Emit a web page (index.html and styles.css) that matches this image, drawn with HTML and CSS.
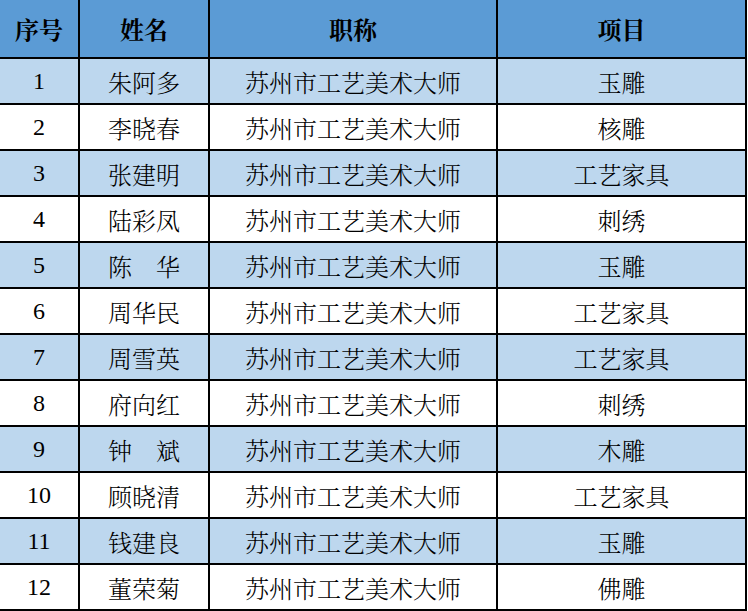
FILE: index.html
```html
<!DOCTYPE html>
<html lang="zh-CN">
<head>
<meta charset="utf-8">
<title>苏州市工艺美术大师</title>
<link rel="stylesheet" href="styles.css">
</head>
<body>
<div class="table">
  <div class="cell head">序号</div><div class="cell head">姓名</div><div class="cell head">职称</div><div class="cell head">项目</div>

  <div class="cell alt num">1</div><div class="cell alt">朱阿多</div><div class="cell alt">苏州市工艺美术大师</div><div class="cell alt">玉雕</div>
  <div class="cell num">2</div><div class="cell">李晓春</div><div class="cell">苏州市工艺美术大师</div><div class="cell">核雕</div>
  <div class="cell alt num">3</div><div class="cell alt">张建明</div><div class="cell alt">苏州市工艺美术大师</div><div class="cell alt">工艺家具</div>
  <div class="cell num">4</div><div class="cell">陆彩凤</div><div class="cell">苏州市工艺美术大师</div><div class="cell">刺绣</div>
  <div class="cell alt num">5</div><div class="cell alt">陈　华</div><div class="cell alt">苏州市工艺美术大师</div><div class="cell alt">玉雕</div>
  <div class="cell num">6</div><div class="cell">周华民</div><div class="cell">苏州市工艺美术大师</div><div class="cell">工艺家具</div>
  <div class="cell alt num">7</div><div class="cell alt">周雪英</div><div class="cell alt">苏州市工艺美术大师</div><div class="cell alt">工艺家具</div>
  <div class="cell num">8</div><div class="cell">府向红</div><div class="cell">苏州市工艺美术大师</div><div class="cell">刺绣</div>
  <div class="cell alt num">9</div><div class="cell alt">钟　斌</div><div class="cell alt">苏州市工艺美术大师</div><div class="cell alt">木雕</div>
  <div class="cell num">10</div><div class="cell">顾晓清</div><div class="cell">苏州市工艺美术大师</div><div class="cell">工艺家具</div>
  <div class="cell alt num">11</div><div class="cell alt">钱建良</div><div class="cell alt">苏州市工艺美术大师</div><div class="cell alt">玉雕</div>
  <div class="cell num">12</div><div class="cell">董荣菊</div><div class="cell">苏州市工艺美术大师</div><div class="cell">佛雕</div>
</div>
</body>
</html>
```

FILE: styles.css
```css
html, body {
  margin: 0;
  padding: 0;
  background: #ffffff;
}

.table {
  display: grid;
  grid-template-columns: 80px 130px 288px 249px;
  grid-template-rows: 59px repeat(12, 46px);
  width: 747px;
  font-family: "Liberation Serif", "Noto Serif CJK SC", "Noto Sans CJK SC", serif;
  color: #000;
}

.cell {
  box-sizing: border-box;
  border-right: 2px solid #000;
  border-bottom: 2px solid #000;
  display: flex;
  align-items: center;
  justify-content: center;
  font-size: 24px;
  font-weight: 300;
  background: #ffffff;
  white-space: nowrap;
}

.head {
  background: #5b9bd5;
  font-weight: 700;
  font-size: 24px;
}

.alt {
  background: #bdd7ee;
}

.num {
  font-size: 24px;
  font-weight: 400;
}
```
